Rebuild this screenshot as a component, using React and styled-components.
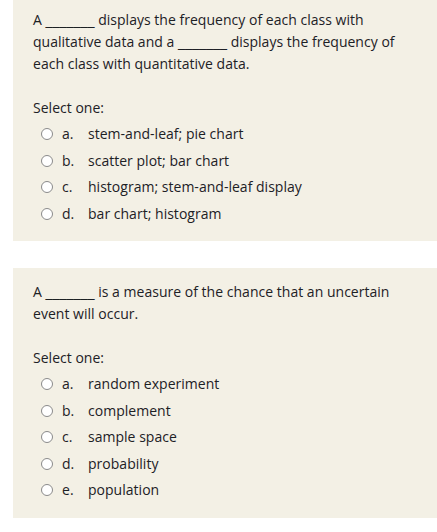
import React from "react";
import styled, { createGlobalStyle } from "styled-components";

const Global = createGlobalStyle`
  html, body { margin: 0; padding: 0; background: #ffffff; }
  body {
    font-family: "Open Sans", "Noto Sans", sans-serif;
    color: #1d2125;
    overflow: hidden;
  }
`;

const Page = styled.div`
  display: flex;
  flex-direction: column;
  gap: 27px;
  padding-left: 13px;
  margin-top: -4px;
`;

const Panel = styled.div`
  background: #f3f0e5;
  padding: 13px 0 14px 20px;
  font-size: 14px;
  letter-spacing: 0.02px;
  line-height: 22px;
`;

const QText = styled.p`
  margin: 0 0 22px 0;
  width: 380px;
`;

const Blank = styled.span`
  font-family: "DejaVu Sans", sans-serif;
  letter-spacing: 0;
`;

const Prompt = styled.div`
  margin-bottom: 2px;
`;

const Options = styled.div`
  display: flex;
  flex-direction: column;
`;

const Option = styled.label`
  display: flex;
  align-items: center;
  height: 26.5px;
  padding-left: 8px;
`;

const Radio = styled.span`
  width: 12px;
  height: 12px;
  border-radius: 50%;
  border: 1px solid #8a8a8a;
  background: #ffffff;
  box-sizing: border-box;
  flex: none;
  margin-right: 9px;
`;

const Letter = styled.span`
  width: 26px;
  flex: none;
`;

const B = () => <Blank>_______</Blank>;

const q1 = {
  text: (
    <>
      A <B /> displays the frequency of each class with qualitative data and a <B /> displays the frequency of each class with quantitative data.
    </>
  ),
  options: [
    ["a.", "stem-and-leaf; pie chart"],
    ["b.", "scatter plot; bar chart"],
    ["c.", "histogram; stem-and-leaf display"],
    ["d.", "bar chart; histogram"],
  ],
};

const q2 = {
  text: (
    <>
      A <B /> is a measure of the chance that an uncertain event will occur.
    </>
  ),
  options: [
    ["a.", "random experiment"],
    ["b.", "complement"],
    ["c.", "sample space"],
    ["d.", "probability"],
    ["e.", "population"],
  ],
};

function Question({ q }) {
  return (
    <Panel>
      <QText>{q.text}</QText>
      <Prompt>Select one:</Prompt>
      <Options>
        {q.options.map(([l, t]) => (
          <Option key={l}>
            <Radio />
            <Letter>{l}</Letter>
            <span>{t}</span>
          </Option>
        ))}
      </Options>
    </Panel>
  );
}

export default function App() {
  return (
    <>
      <Global />
      <Page>
        <Question q={q1} />
        <Question q={q2} />
      </Page>
    </>
  );
}
